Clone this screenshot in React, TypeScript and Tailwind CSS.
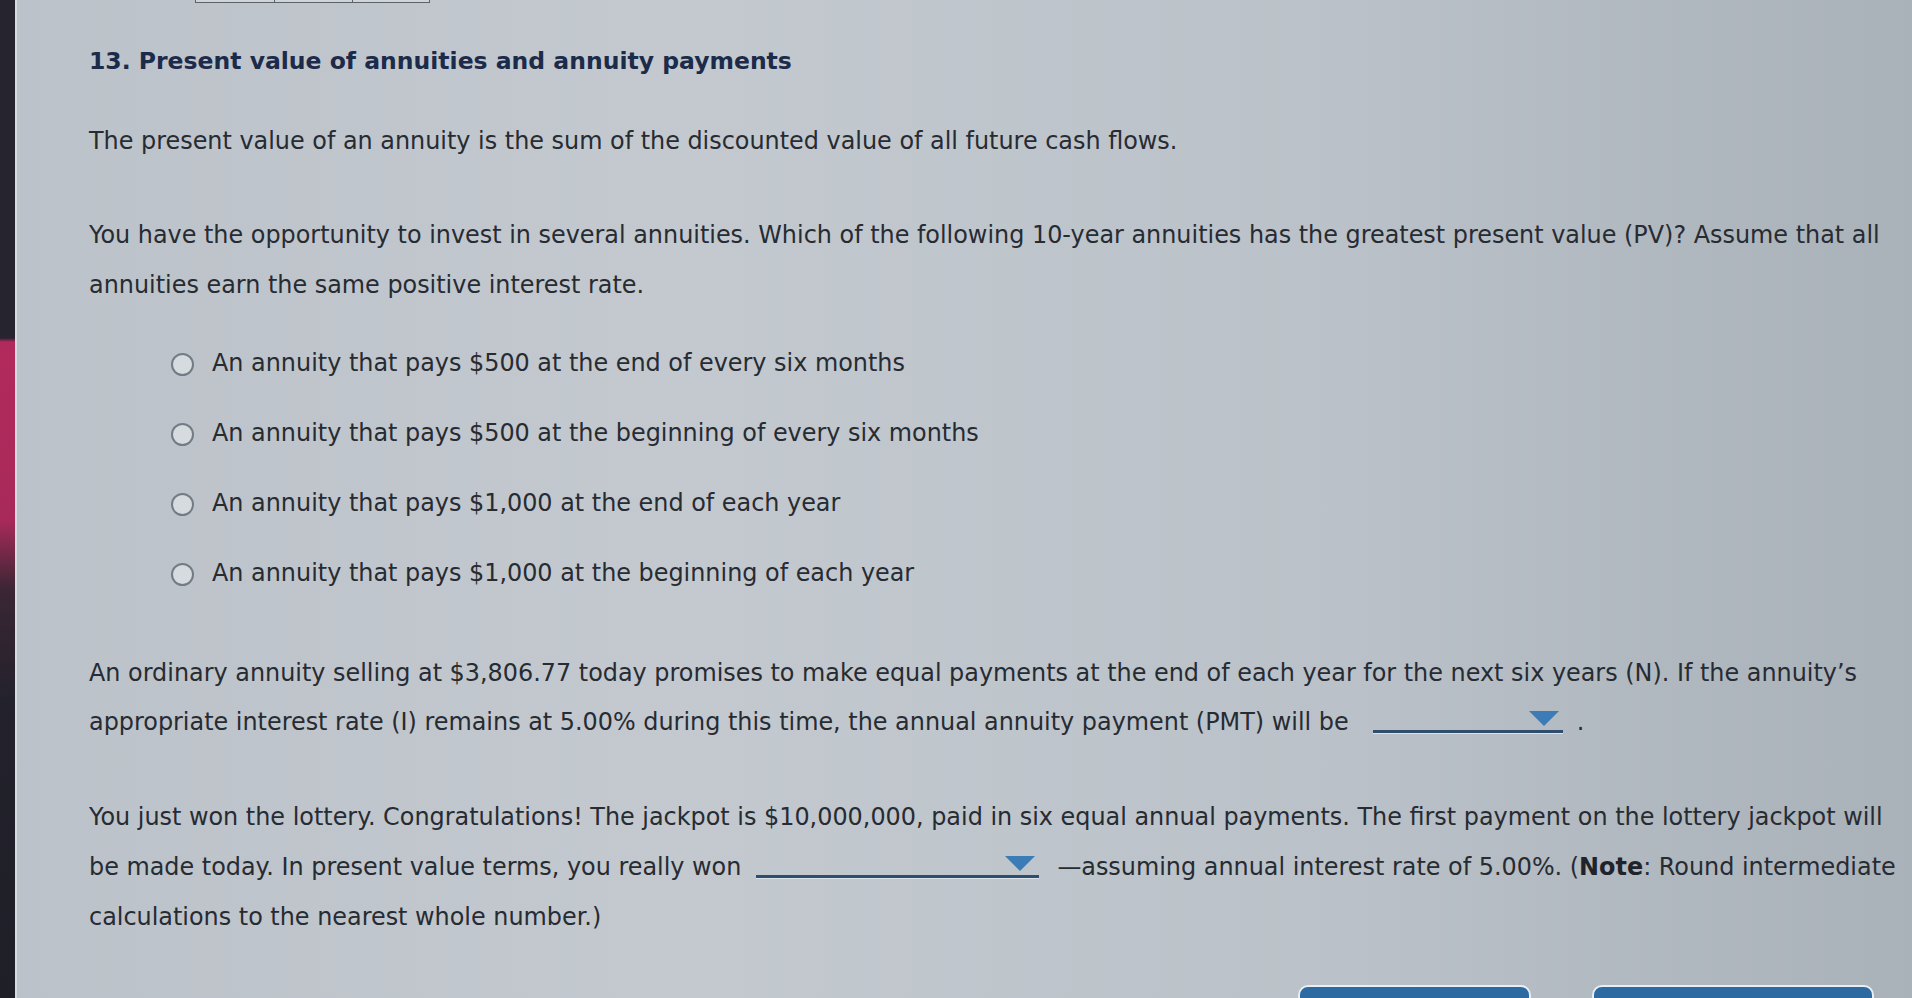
import React from "react";

function Dropdown({ width }: { width: string }) {
  return (
    <span
      className={`inline-block ${width} h-[26px] overflow-hidden border-b-[3px] border-[#2f4e6e] align-[-3px] shadow-[0_1px_0_#dbe3ea]`}
    >
      <span className="flex h-full items-end justify-end pr-[4px] pb-[4px]">
        <svg width="30" height="15" viewBox="0 0 30 15" className="shrink-0">
          <polygon points="0,0 30,0 15,15" fill="#3b7bb6" />
        </svg>
      </span>
    </span>
  );
}

function Radio({ label }: { label: string }) {
  return (
    <div className="flex h-[70px] items-center">
      <span className="ml-[82px] h-[23px] w-[23px] shrink-0 rounded-full border-[2px] border-[#737b84] bg-[#d6dbe0]" />
      <span className="ml-[18px]">{label}</span>
    </div>
  );
}

export default function App() {
  return (
    <div className="flex h-[998px] w-[1912px] overflow-hidden font-['DejaVu_Sans',sans-serif] text-[23.9px] text-[#272b32]">
      <div className="h-full w-[15px] shrink-0 bg-[linear-gradient(180deg,#25242f_0px,#25242f_338px,#b22a5c_342px,#a82a5a_520px,#3a2634_590px,#23222c_700px,#1f1f28_998px)]" />
      <div className="h-full w-[2px] shrink-0 bg-[#d6dbe0]" />
      <div className="flex h-full min-w-0 flex-1 flex-col overflow-hidden bg-[linear-gradient(90deg,#bcc2c9_0%,#c3c9cf_35%,#bac1c8_70%,#a9b1b9_100%)]">
        <div className="ml-[178px] flex h-[3px]">
          <div className="h-[3px] w-[80px] border-x border-b border-[#5d6268] bg-[#cfd4d9]" />
          <div className="h-[3px] w-[78px] border-r border-b border-[#5d6268] bg-[#cfd4d9]" />
          <div className="h-[3px] w-[77px] border-r border-b border-[#5d6268] bg-[#cfd4d9]" />
        </div>
        <div className="pl-[72px] pr-[20px]">
          <h1 className="mt-[43px] text-[23.5px] leading-[30px] font-bold text-[#1c2b4a]">
            13. Present value of annuities and annuity payments
          </h1>
          <p className="mt-[40px] leading-[50px] whitespace-nowrap">
            The present value of an annuity is the sum of the discounted value of all future cash flows.
          </p>
          <p className="mt-[44px] leading-[50px] whitespace-nowrap">
            You have the opportunity to invest in several annuities. Which of the following 10-year annuities has the greatest present value (PV)? Assume that all
            <br />
            annuities earn the same positive interest rate.
          </p>
          <div className="mt-[19px] flex flex-col">
            <Radio label="An annuity that pays $500 at the end of every six months" />
            <Radio label="An annuity that pays $500 at the beginning of every six months" />
            <Radio label="An annuity that pays $1,000 at the end of each year" />
            <Radio label="An annuity that pays $1,000 at the beginning of each year" />
          </div>
          <p className="mt-[40px] leading-[49px] whitespace-nowrap">
            An ordinary annuity selling at $3,806.77 today promises to make equal payments at the end of each year for the next six years (N). If the annuity’s
            <br />
            appropriate interest rate (I) remains at 5.00% during this time, the annual annuity payment (PMT) will be
            <span className="ml-[24px]">
              <Dropdown width="w-[190px]" />
            </span>
            <span className="ml-[14px]">.</span>
          </p>
          <p className="mt-[45px] leading-[50px] whitespace-nowrap">
            You just won the lottery. Congratulations! The jackpot is $10,000,000, paid in six equal annual payments. The first payment on the lottery jackpot will
            <br />
            be made today. In present value terms, you really won
            <span className="ml-[15px]">
              <Dropdown width="w-[283px]" />
            </span>
            <span className="ml-[18px]">—assuming annual interest rate of 5.00%. (</span>
            <span className="font-bold text-[#1f232a]">Note</span>
            <span>: Round intermediate</span>
            <br />
            calculations to the nearest whole number.)
          </p>
        </div>
        <div className="mt-[43px] flex justify-end gap-[61px] pr-[38px]">
          <div className="h-[40px] w-[233px] shrink-0 rounded-t-[10px] border-[2px] border-[#e8eef4] bg-[#2e6aa2]" />
          <div className="h-[40px] w-[282px] shrink-0 rounded-t-[10px] border-[2px] border-[#e8eef4] bg-[#2e6aa2]" />
        </div>
      </div>
    </div>
  );
}
